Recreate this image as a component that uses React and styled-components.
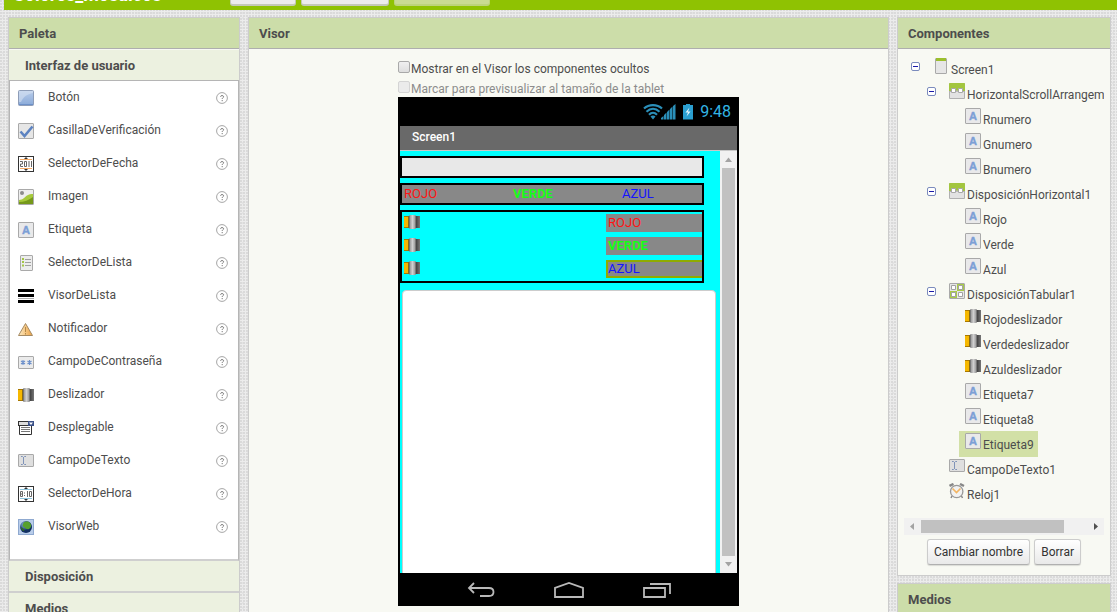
import React, { useState } from 'react';
import styled, { createGlobalStyle, css } from 'styled-components';

const GlobalStyle = createGlobalStyle`
  * {
    box-sizing: border-box;
  }

  body {
    margin: 0;
    font-family: Roboto, 'Liberation Sans', sans-serif;
    font-size: 12px;
    color: #4d4d4d;
    background-color: #ececec;
    background-image:
      radial-gradient(circle at 1px 1px, #dadada 1px, transparent 1px),
      radial-gradient(circle at 3px 3px, #e3e3e3 1px, transparent 1px);
    background-size: 3px 3px, 5px 5px;
  }

  button, input, textarea {
    font: inherit;
    color: inherit;
    margin: 0;
  }
`;

const Page = styled.div`
  height: 100vh;
  overflow: hidden;
  display: flex;
  flex-direction: column;
`;

const TopBar = styled.header`
  flex: none;
  height: 10px;
  margin-left: 4px;
  padding-left: 9px;
  overflow: hidden;
  display: flex;
  align-items: flex-end;
  gap: 5px;
  background: #8fc202;
`;

const ProjectName = styled.h1`
  width: 212px;
  margin: 0;
  padding-bottom: 6px;
  color: white;
  font-size: 18px;
  line-height: 18px;
  font-weight: 700;
`;

const TopButton = styled.button`
  width: ${props => props.$width}px;
  height: 26px;
  margin-bottom: 4px;
  border: 1px solid ${props => (props.disabled ? '#bcd37c' : '#c4c8b8')};
  border-bottom-width: 2px;
  border-radius: 3px;
  background: ${props => (props.disabled ? '#c9db93' : '#ececec')};
`;

const Workspace = styled.main`
  flex: 1;
  min-height: 0;
  display: flex;
  align-items: flex-start;
  gap: 8px;
  padding: 7px 6px 0 8px;
`;

const Panel = styled.section`
  border: 1px solid #cccccc;
  background: #f8f9f3;
`;

const PanelTitle = styled.h2`
  margin: 0;
  padding: 0 10px;
  height: 31px;
  border-bottom: 1px solid #aeaeae;
  background: #ccdda9;
  font-size: 13px;
  line-height: 31px;
  font-weight: 700;
`;

const PalettePanel = styled(Panel)`
  flex: none;
  width: 232px;

  ${PanelTitle} {
    margin-bottom: 1px;
  }
`;

const ViewerPanel = styled(Panel)`
  flex: 1;
  min-width: 0;
  padding-bottom: 10px;
`;

const SideColumn = styled.div`
  flex: none;
  width: 214px;
  display: flex;
  flex-direction: column;
  gap: 7px;
`;

const SectionHeader = styled.button`
  display: block;
  width: 100%;
  height: ${props => (props.$open ? '31px' : '32px')};
  padding: 0 16px;
  border: 0;
  border-bottom: ${props => (props.$open ? '1px solid #b5b5b5' : '2px solid #cfcfcf')};
  background: #ecf1e0;
  font-size: 13px;
  font-weight: 700;
  text-align: left;
`;

const PaletteList = styled.ul`
  margin: 0;
  padding: 0 0 16px;
  list-style: none;
  background: white;
  border: 1px solid #b5b5b5;
  border-width: 0 1px;
  border-bottom: 2px solid #cfcfcf;
`;

const PaletteRow = styled.li`
  display: flex;
  align-items: center;
  height: 33px;
  padding: 0 10px 0 8px;
`;

const PaletteLabel = styled.span`
  flex: 1;
  padding: 0 0 1px 14px;
`;

const HelpButton = styled.button`
  display: flex;
  padding: 0;
  border: 0;
  background: none;
`;

const ViewerOptions = styled.div`
  display: flex;
  flex-direction: column;
  gap: 4px;
  width: 341px;
  margin: 12px auto 0;
`;

const Option = styled.label`
  display: flex;
  align-items: center;
  gap: 1px;
  height: 16px;
  color: ${props => (props.$muted ? '#8c8c8c' : '#4d4d4d')};
`;

const Checkbox = styled.input`
  appearance: none;
  align-self: flex-start;
  width: 12px;
  height: 12px;
  border: 1px solid #a9a9a9;
  border-radius: 2px;
  background: linear-gradient(#f0f0f0, #dedede);

  &:checked {
    background: #8fc202;
  }

  &:disabled {
    border-color: #d4d4d4;
    background: #ebebeb;
  }
`;

const Phone = styled.div`
  width: 341px;
  margin: 0 auto;
  padding: 0 2px;
  background: black;
`;

const StatusBar = styled.div`
  display: flex;
  align-items: center;
  justify-content: flex-end;
  height: 29px;
  padding-right: 6px;
  color: #33b5e5;
  font-size: 16px;

  svg {
    margin-right: 6px;
  }
`;

const ScreenTitle = styled.div`
  height: 25px;
  padding: 0 12px;
  border-bottom: 1px solid #c8c8c8;
  background: #696969;
  color: white;
  line-height: 22px;
  font-weight: 500;
`;

const Screen = styled.div`
  display: flex;
  height: 422px;
  overflow: hidden;
  background: cyan;
`;

const ScreenBody = styled.div`
  flex: 1;
  display: flex;
  flex-direction: column;
  gap: 5px;
  padding-top: 5px;
`;

const Arrangement = styled.div`
  width: 304px;
  border: 2px solid black;
  overflow: hidden;
`;

const ScrollArrangement = styled(Arrangement)`
  height: 22px;
  background: #e8e8e8;
`;

const RowArrangement = styled(Arrangement)`
  display: grid;
  grid-template-columns: 109px 109px 1fr;
  align-items: center;
  height: 22px;
  padding: 0 2px;
  background: #888888;
`;

const TableArrangement = styled(Arrangement)`
  display: grid;
  grid-template-columns: 1fr 96px;
  row-gap: 5px;
  padding: 2px 0 3px 2px;
`;

const ColorLabel = styled.span`
  color: ${props => props.$color};
  font-weight: ${props => (props.$bold ? 700 : 400)};
  font-size: 13px;
  line-height: 14px;
`;

const CellLabel = styled(ColorLabel)`
  height: 18px;
  padding: 2px;
  background: #888888;
  ${props => props.$selected && css`
    padding: 0;
    border: 2px solid #8fab00;
    border-right: 0;
  `}
`;

const ScreenText = styled.textarea`
  flex: 1;
  display: block;
  margin: 2px 4px -6px 2px;
  border: 1px solid #cccccc;
  border-radius: 4px;
  background: white;
  resize: none;
  outline: none;
`;

const ScrollTrack = styled.div`
  flex: none;
  display: flex;
  flex-direction: column;
  align-items: center;
  width: 17px;
  background: #f1f1f1;
`;

const TreeScroll = styled.div`
  display: flex;
  align-items: center;
  height: 17px;
  margin: 0 6px;
  background: #f1f1f1;
`;

const ScrollArrow = styled.svg`
  flex: none;
  width: 17px;
  height: 17px;
`;

const VerticalThumb = styled.div`
  flex: 1;
  width: 13px;
  background: #c1c1c1;
`;

const HorizontalRail = styled.div`
  flex: 1;
  height: 13px;
`;

const HorizontalThumb = styled.div`
  width: 86%;
  height: 100%;
  background: #c1c1c1;
`;

const NavBar = styled.div`
  display: grid;
  grid-template-columns: repeat(3, 88px);
  justify-content: center;
  justify-items: center;
  align-items: center;
  height: 33px;
`;

const Tree = styled.ul`
  margin: 0 6px;
  padding: 7px 0 12px;
  list-style: none;
  overflow: hidden;
`;

const TreeRow = styled.li`
  display: flex;
  height: 25px;
  padding-left: ${props => props.$level * 16}px;
  white-space: nowrap;
`;

const Toggle = styled.button`
  flex: none;
  display: flex;
  width: 21px;
  padding: 6px 0 0 7px;
  border: 0;
  background: none;
`;

const ToggleSpace = styled.span`
  flex: none;
  width: 21px;
`;

const TreeNode = styled.span`
  display: flex;
  gap: ${props => (props.$root ? '4px' : '2px')};
  height: 26px;
  padding: 2px 4px 0 6px;
  margin-left: ${props => (props.$root ? '4px' : '2px')};
  background: ${props => (props.$selected ? '#d2e0a6' : 'transparent')};

  svg {
    flex: none;
  }
`;

const TreeLabel = styled.span`
  padding-top: 5px;
  line-height: 14px;
`;

const TreeActions = styled.div`
  display: flex;
  justify-content: center;
  gap: 4px;
  padding: 4px 0 10px;
`;

const ActionButton = styled.button`
  height: 26px;
  padding: 0 6px;
  border: 1px solid #cccccc;
  border-bottom-color: #b0b0b0;
  border-radius: 3px;
  background: linear-gradient(#ffffff, #e9e9e9);
  box-shadow: 0 1px 1px rgba(0, 0, 0, 0.12);
  color: #333;
`;

const Svg = ({ children }) => (
  <svg width="16" height="16" viewBox="0 0 16 16" aria-hidden="true">{children}</svg>
);

const Frame = ({ y = 0.5, h = 15, fill = '#e6e6e6' }) => (
  <rect x="0.5" y={y} width="15" height={h} rx="0.5" fill={fill} stroke="#a9a9a9" />
);

const icons = {
  button: (
    <Svg>
      <defs>
        <linearGradient id="btn" x1="0" y1="0" x2="0" y2="1">
          <stop offset="0" stopColor="#b9cdea" />
          <stop offset="1" stopColor="#89a9d8" />
        </linearGradient>
      </defs>
      <rect x="0.5" y="0.5" width="15" height="15" rx="1" fill="url(#btn)" stroke="#8e9db8" />
      <path d="M1 1h14v2C9 4 5 7 3 12H1z" fill="#d5e1f2" opacity="0.6" />
      <path d="M1 14.5h14" stroke="#6d91c9" />
    </Svg>
  ),
  check: (
    <Svg>
      <Frame />
      <path d="M2.5 8.5L6.5 13L14.5 3.5" fill="none" stroke="#5d83c1" strokeWidth="2.6" />
    </Svg>
  ),
  date: (
    <Svg>
      <rect x="0.5" y="0.5" width="15" height="15" fill="#fff" stroke="#333" />
      <path d="M2 3.500h12M2 12.500h12" stroke="#f5a964" />
      <path d="M6 3L8 1L10 3zM6 13L8 15L10 13z" fill="#333" />
      <path d="M2 5.500h2.500v2.500h-2v2.500H5M6.500 5.500h2v5h-2zM11 5v6M13.500 5v6" fill="none" stroke="#666" />
    </Svg>
  ),
  image: (
    <Svg>
      <Frame fill="#eeeeee" />
      <circle cx="4" cy="4" r="2" fill="#8b8b8b" />
      <path d="M1 11C5 11 7 8 9 6.500C11 5 13 5 15 5V15H1z" fill="#a6c93b" />
      <path d="M1 13C6 13 11 11 15 8V15H1z" fill="#76991a" />
    </Svg>
  ),
  label: (
    <Svg>
      <Frame fill="#e9e9ea" />
      <text x="8" y="12" textAnchor="middle" fontFamily="Liberation Sans" fontSize="11" fontWeight="700" fill="#7c9fd6" stroke="#7c9fd6" strokeWidth="0.4">A</text>
    </Svg>
  ),
  list: (
    <Svg>
      <rect x="2.500" y="0.5" width="12" height="15" rx="0.5" fill="#ececec" stroke="#a9a9a9" />
      <path d="M4 3h2v2H4zM4 6h2v2H4zM4 9.500h2v2H4z" fill="#a3c644" />
      <path d="M7 4.500h6M7 7.500h6M7 10.500h6" stroke="#a0a0a0" />
    </Svg>
  ),
  listView: (
    <Svg>
      <path d="M0 1h16v3H0zM0 6h16v3H0zM0 12h16v3H0z" fill="#000" />
      <path d="M0 10.500h16" stroke="#aaa" />
    </Svg>
  ),
  notifier: (
    <Svg>
      <defs>
        <linearGradient id="warn">
          <stop offset="0" stopColor="#fdebc4" />
          <stop offset="1" stopColor="#eda244" />
        </linearGradient>
      </defs>
      <path d="M7.500 2.500L14.500 14.500H0.5z" fill="url(#warn)" stroke="#a58a63" strokeLinejoin="round" />
      <path d="M7.500 6v5M7.500 12v1.500" stroke="#b48a4a" />
    </Svg>
  ),
  password: (
    <Svg>
      <Frame y={2.5} h={12} fill="#ebebeb" />
      <path d="M5 6v5M3 7l4 3M7 7l-4 3M11.500 6v5M9.500 7l4 3M13.500 7l-4 3" stroke="#6c90cb" strokeWidth="1.100" />
    </Svg>
  ),
  slider: (
    <Svg>
      <defs>
        <linearGradient id="knob">
          <stop offset="0" stopColor="#8a8a8a" />
          <stop offset="0.5" stopColor="#cfcfcf" />
          <stop offset="1" stopColor="#8a8a8a" />
        </linearGradient>
        <linearGradient id="rail">
          <stop offset="0" stopColor="#333" />
          <stop offset="1" stopColor="#777" />
        </linearGradient>
      </defs>
      <rect x="0" y="2" width="5" height="12" fill="#f6b800" />
      <path d="M0 2.500h5M0 13.500h5" stroke="#a87800" />
      <rect x="4" y="2" width="2" height="12" fill="#8a6a14" />
      <rect x="11" y="2" width="5" height="12" fill="url(#rail)" />
      <rect x="5" y="1" width="7" height="14" rx="1" fill="url(#knob)" />
      <path d="M5.500 2v12M11.500 2v12" stroke="#777" />
    </Svg>
  ),
  spinner: (
    <Svg>
      <rect x="0.5" y="1.500" width="15" height="4" fill="#ddd" stroke="#333" />
      <rect x="10" y="1" width="6" height="5" fill="#3b5188" />
      <path d="M11 2.500h4L13 5z" fill="#fff" />
      <path d="M1.500 6v8.500h12V6" fill="#fff" stroke="#333" />
      <path d="M3 7.500h9M3 9.500h9M3 11.500h9" stroke="#777" />
    </Svg>
  ),
  textBox: (
    <Svg>
      <Frame y={1.5} h={12} fill="#dfdfdf" />
      <path d="M3 3.500h1.500l1 1l1-1H8M3 11.500h1.500l1-1l1 1H8M5.500 4v7" fill="none" stroke="#7f93b8" />
    </Svg>
  ),
  time: (
    <Svg>
      <rect x="0.5" y="0.5" width="15" height="15" fill="#fff" stroke="#333" />
      <path d="M2 3.500h12M2 12.500h12" stroke="#8bc3dc" />
      <path d="M6 3L8 1L10 3zM6 13L8 15L10 13z" fill="#333" />
      <path d="M2.500 5.500h2v5h-2zM2.500 8h2M9.500 5v6M11.500 5.500h2v5h-2zM6.500 6.500v1M6.500 9v1" fill="none" stroke="#666" />
    </Svg>
  ),
  web: (
    <Svg>
      <defs>
        <radialGradient id="globe" cx="0.35" cy="0.3">
          <stop offset="0" stopColor="#8fb7e8" />
          <stop offset="1" stopColor="#123062" />
        </radialGradient>
      </defs>
      <rect x="0.5" y="0.5" width="15" height="15" fill="#b9cdea" stroke="#8fa9d0" />
      <circle cx="8" cy="8" r="6" fill="url(#globe)" />
      <path d="M5 5C6 2 10 2 12 4C14 6 13 9 11 10C9 11 7 9 6 8C5 8 4 7 5 5z" fill="#57a02c" />
      <path d="M3 8C5 9 7 11 6 12C4 12 3 10 3 8z" fill="#2f6b25" />
    </Svg>
  ),
  screen: (
    <svg width="12" height="16" viewBox="0 0 12 16" aria-hidden="true">
      <rect x="0.5" y="0.5" width="11" height="15" rx="0.5" fill="#e6e6e6" stroke="#a9a9a9" />
      <path d="M1 0h10v3H1z" fill="#9bbf2d" />
    </svg>
  ),
  horizontal: (
    <Svg>
      <rect width="16" height="16" rx="1" fill="#b0b0b0" />
      <path d="M0 1a1 1 0 0 1 1-1h14a1 1 0 0 1 1 1v7H0z" fill="#a3c63f" />
      <path d="M1 9h14v6H1z" fill="#e2e2e2" />
      <path d="M2.500 5.500h4v4h-4zM9.500 5.500h4v4h-4z" fill="#fff" stroke="#a8a8a8" />
      <path d="M7 8h2" stroke="#c4c4c4" />
    </Svg>
  ),
  table: (
    <Svg>
      <Frame />
      <path d="M8 1h7v7H8zM1 8h7v7H1z" fill="#a8cb46" />
      <path d="M2.500 2.500h4v4h-4zM9.500 2.500h4v4h-4zM2.500 9.500h4v4h-4zM9.500 9.500h4v4h-4z" fill="#fff" stroke="#a2a2a2" />
    </Svg>
  ),
  clock: (
    <Svg>
      <path d="M0.500 3L4.500 1M11 1L15 3" stroke="#888" strokeWidth="2.500" />
      <path d="M3 13L2 15M12.500 13L13.500 15" stroke="#888" strokeWidth="1.500" />
      <circle cx="7.700" cy="8.500" r="6.200" fill="#f2f2f2" stroke="#999" strokeWidth="1.300" />
      <path d="M3.500 5.500L7.500 9.500L11.500 5.500" fill="none" stroke="#f3b664" strokeWidth="1.700" />
    </Svg>
  ),
};

const HelpIcon = () => (
  <svg width="12" height="12" viewBox="0 0 12 12" aria-hidden="true">
    <circle cx="6" cy="6" r="5.4" fill="#fff" stroke="#a6a6a6" />
    <path d="M4.500 4.700C4.500 3.200 7.600 3.200 7.600 4.700C7.600 5.700 6.200 5.700 6.200 7M6.200 8v1.200" fill="none" stroke="#7a7a7a" />
  </svg>
);

const MinusBox = () => (
  <svg width="9" height="9" viewBox="0 0 9 9" aria-hidden="true">
    <rect x="0.5" y="0.5" width="8" height="8" rx="1.500" fill="#fff" stroke="#7b8bbd" />
    <path d="M2 4.500h5" stroke="#1a1aa8" />
  </svg>
);

const StatusIcons = () => (
  <svg width="51" height="16" viewBox="0 0 51 16" aria-hidden="true">
    <g fill="none" stroke="#2b8fb9" strokeWidth="2.200">
      <path d="M1 4.500C6 0 14 0 19 4.500" />
      <path d="M3.500 7.700C7.500 4 12.500 4 16.500 7.700" />
      <path d="M6 10.700C8.500 8.200 11.500 8.200 14 10.700" />
    </g>
    <path d="M7.500 12.500L10 15.500L12.500 12.500C11 11.200 9 11.200 7.500 12.500z" fill="#2b8fb9" />
    <path d="M18 15.500v-1.500l2.500-2v3.500zM21 15.500v-4.500l2.500-2.500v7zM24 15.500v-7.500l2.500-2.500v10zM27 15.500v-10.500l2.500-2.500v13zM30 15.500v-13.500l2.500-2v15.500z" fill="#2b8fb9" />
    <path d="M43 0h4v1h3v14.500H40V1h3z" fill="#2b9fd0" />
    <path d="M46.500 3.500L42.500 8.500H45L43.500 12.500L47.500 7.500H45z" fill="#e8f6fc" />
  </svg>
);

const paletteItems = [
  ['button', 'Botón'],
  ['check', 'CasillaDeVerificación'],
  ['date', 'SelectorDeFecha'],
  ['image', 'Imagen'],
  ['label', 'Etiqueta'],
  ['list', 'SelectorDeLista'],
  ['listView', 'VisorDeLista'],
  ['notifier', 'Notificador'],
  ['password', 'CampoDeContraseña'],
  ['slider', 'Deslizador'],
  ['spinner', 'Desplegable'],
  ['textBox', 'CampoDeTexto'],
  ['time', 'SelectorDeHora'],
  ['web', 'VisorWeb'],
];

const treeItems = [
  { level: 0, icon: 'screen', name: 'Screen1', open: true },
  { level: 1, icon: 'horizontal', name: 'HorizontalScrollArrangement1', open: true },
  { level: 2, icon: 'label', name: 'Rnumero' },
  { level: 2, icon: 'label', name: 'Gnumero' },
  { level: 2, icon: 'label', name: 'Bnumero' },
  { level: 1, icon: 'horizontal', name: 'DisposiciónHorizontal1', open: true },
  { level: 2, icon: 'label', name: 'Rojo' },
  { level: 2, icon: 'label', name: 'Verde' },
  { level: 2, icon: 'label', name: 'Azul' },
  { level: 1, icon: 'table', name: 'DisposiciónTabular1', open: true },
  { level: 2, icon: 'slider', name: 'Rojodeslizador' },
  { level: 2, icon: 'slider', name: 'Verdedeslizador' },
  { level: 2, icon: 'slider', name: 'Azuldeslizador' },
  { level: 2, icon: 'label', name: 'Etiqueta7' },
  { level: 2, icon: 'label', name: 'Etiqueta8' },
  { level: 2, icon: 'label', name: 'Etiqueta9' },
  { level: 1, icon: 'textBox', name: 'CampoDeTexto1' },
  { level: 1, icon: 'clock', name: 'Reloj1' },
];

const colorLabels = [
  { text: 'ROJO', color: '#ff1414' },
  { text: 'VERDE', color: '#14ff14', bold: true },
  { text: 'AZUL', color: '#1414ff' },
];

const Palette = () => (
  <PalettePanel>
    <PanelTitle>Paleta</PanelTitle>
    <SectionHeader type="button" $open>Interfaz de usuario</SectionHeader>
    <PaletteList>
      {paletteItems.map(([icon, name]) => (
        <PaletteRow key={name}>
          {icons[icon]}
          <PaletteLabel>{name}</PaletteLabel>
          <HelpButton type="button" aria-label={`Ayuda: ${name}`}>
            <HelpIcon />
          </HelpButton>
        </PaletteRow>
      ))}
    </PaletteList>
    <SectionHeader type="button">Disposición</SectionHeader>
    <SectionHeader type="button">Medios</SectionHeader>
  </PalettePanel>
);

const Viewer = () => {
  const [showHidden, setShowHidden] = useState(false);

  return (
    <ViewerPanel>
      <PanelTitle>Visor</PanelTitle>
      <ViewerOptions>
        <Option>
          <Checkbox
            type="checkbox"
            checked={showHidden}
            onChange={e => setShowHidden(e.target.checked)}
          />
          Mostrar en el Visor los componentes ocultos
        </Option>
        <Option $muted>
          <Checkbox type="checkbox" disabled />
          Marcar para previsualizar al tamaño de la tablet
        </Option>
      </ViewerOptions>
      <Phone>
        <StatusBar>
          <StatusIcons />
          9:48
        </StatusBar>
        <ScreenTitle>Screen1</ScreenTitle>
        <Screen>
          <ScreenBody>
            <ScrollArrangement />
            <RowArrangement>
              {colorLabels.map(label => (
                <ColorLabel key={label.text} $color={label.color} $bold={label.bold}>
                  {label.text}
                </ColorLabel>
              ))}
            </RowArrangement>
            <TableArrangement>
              {colorLabels.map(label => (
                <React.Fragment key={label.text}>
                  {icons.slider}
                  <CellLabel
                    $color={label.color}
                    $bold={label.bold}
                    $selected={label.text === 'AZUL'}
                  >
                    {label.text}
                  </CellLabel>
                </React.Fragment>
              ))}
            </TableArrangement>
            <ScreenText aria-label="CampoDeTexto1" />
          </ScreenBody>
          <ScrollTrack>
            <ScrollArrow viewBox="0 0 17 17"><path d="M8.500 6.500L12 11H5z" fill="#a3a3a3" /></ScrollArrow>
            <VerticalThumb />
            <ScrollArrow viewBox="0 0 17 17"><path d="M8.500 10.500L12 6H5z" fill="#a3a3a3" /></ScrollArrow>
          </ScrollTrack>
        </Screen>
        <NavBar>
          <svg width="28" height="18" viewBox="0 0 28 18" fill="none" stroke="#b9b9b9" strokeWidth="1.800">
            <path d="M7 2L2 7L7 12M2 7H22C28 7 28 15 22 15H13" />
          </svg>
          <svg width="30" height="18" viewBox="0 0 30 18" fill="none" stroke="#b9b9b9" strokeWidth="1.800">
            <path d="M1 16V7L15 2L29 7V16z" />
          </svg>
          <svg width="28" height="18" viewBox="0 0 28 18" fill="none" stroke="#b9b9b9" strokeWidth="1.800">
            <path d="M1 7H22V16H1zM7 3H27V13" />
          </svg>
        </NavBar>
      </Phone>
    </ViewerPanel>
  );
};

const Components = () => {
  const [selected, setSelected] = useState('Etiqueta9');

  return (
    <Panel>
      <PanelTitle>Componentes</PanelTitle>
      <Tree>
        {treeItems.map(item => (
          <TreeRow key={item.name} $level={item.level}>
            {item.open ? (
              <Toggle type="button" aria-label={`Contraer ${item.name}`}>
                <MinusBox />
              </Toggle>
            ) : (
              <ToggleSpace />
            )}
            <TreeNode
              $root={item.level === 0}
              $selected={item.name === selected}
              onClick={() => setSelected(item.name)}
            >
              {icons[item.icon]}
              <TreeLabel>{item.name}</TreeLabel>
            </TreeNode>
          </TreeRow>
        ))}
      </Tree>
      <TreeScroll>
        <ScrollArrow viewBox="0 0 17 17"><path d="M6 8.500L10 5V12z" fill="#a3a3a3" /></ScrollArrow>
        <HorizontalRail>
          <HorizontalThumb />
        </HorizontalRail>
        <ScrollArrow viewBox="0 0 17 17"><path d="M11 8.500L7 5V12z" fill="#505050" /></ScrollArrow>
      </TreeScroll>
      <TreeActions>
        <ActionButton type="button">Cambiar nombre</ActionButton>
        <ActionButton type="button">Borrar</ActionButton>
      </TreeActions>
    </Panel>
  );
};

const App = () => (
  <>
    <GlobalStyle />
    <Page>
      <TopBar>
        <ProjectName>Colores_mosaicos</ProjectName>
        <TopButton type="button" $width={66} aria-label="Pantalla" />
        <TopButton type="button" $width={88} aria-label="Añadir ventana" />
        <TopButton type="button" $width={96} aria-label="Eliminar ventana" disabled />
      </TopBar>
      <Workspace>
        <Palette />
        <Viewer />
        <SideColumn>
          <Components />
          <Panel>
            <PanelTitle>Medios</PanelTitle>
          </Panel>
        </SideColumn>
      </Workspace>
    </Page>
  </>
);

export default App;
